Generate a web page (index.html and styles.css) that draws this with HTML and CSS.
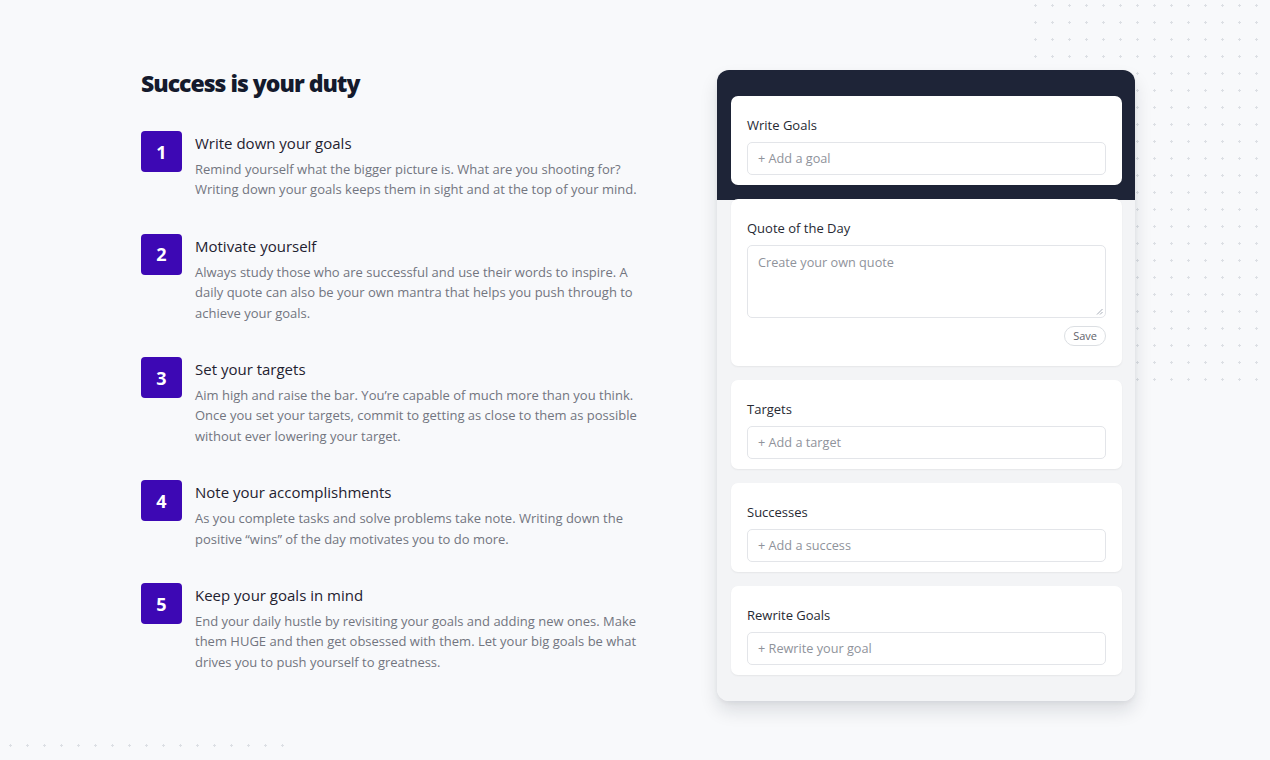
FILE: index.html
```html
<!DOCTYPE html>
<html lang="en">
<head>
<meta charset="utf-8">
<title>Success is your duty</title>
<link rel="stylesheet" href="styles.css">
</head>
<body>
<div class="dots dots-top"></div>
<div class="dots dots-bottom"></div>
<main class="page">
  <section class="steps">
    <h1 class="title">Success is your duty</h1>
    <ol class="step-list">
      <li class="step">
        <span class="badge">1</span>
        <div class="step-body">
          <h2 class="step-title">Write down your goals</h2>
          <p class="step-text">Remind yourself what the bigger picture is. What are you shooting for? Writing down your goals keeps them in sight and at the top of your mind.</p>
        </div>
      </li>
      <li class="step">
        <span class="badge">2</span>
        <div class="step-body">
          <h2 class="step-title">Motivate yourself</h2>
          <p class="step-text">Always study those who are successful and use their words to inspire. A daily quote can also be your own mantra that helps you push through to achieve your goals.</p>
        </div>
      </li>
      <li class="step">
        <span class="badge">3</span>
        <div class="step-body">
          <h2 class="step-title">Set your targets</h2>
          <p class="step-text">Aim high and raise the bar. You’re capable of much more than you think. Once you set your targets, commit to getting as close to them as possible without ever lowering your target.</p>
        </div>
      </li>
      <li class="step">
        <span class="badge">4</span>
        <div class="step-body">
          <h2 class="step-title">Note your accomplishments</h2>
          <p class="step-text">As you complete tasks and solve problems take note. Writing down the positive “wins” of the day motivates you to do more.</p>
        </div>
      </li>
      <li class="step">
        <span class="badge">5</span>
        <div class="step-body">
          <h2 class="step-title">Keep your goals in mind</h2>
          <p class="step-text">End your daily hustle by revisiting your goals and adding new ones. Make them HUGE and then get obsessed with them. Let your big goals be what drives you to push yourself to greatness.</p>
        </div>
      </li>
    </ol>
  </section>

  <section class="panel">
    <div class="card">
      <label class="card-label">Write Goals</label>
      <div class="field">+ Add a goal</div>
    </div>
    <div class="card card-quote">
      <label class="card-label">Quote of the Day</label>
      <div class="field area">Create your own quote
        <svg class="grip" width="7" height="7" viewBox="0 0 7 7"><path d="M6.5 1 L1 6.5 M6.5 4 L4 6.5" stroke="#9ca3af" stroke-width="0.9" fill="none"/></svg>
      </div>
      <div class="actions"><span class="save">Save</span></div>
    </div>
    <div class="card">
      <label class="card-label">Targets</label>
      <div class="field">+ Add a target</div>
    </div>
    <div class="card">
      <label class="card-label">Successes</label>
      <div class="field">+ Add a success</div>
    </div>
    <div class="card">
      <label class="card-label">Rewrite Goals</label>
      <div class="field">+ Rewrite your goal</div>
    </div>
  </section>
</main>
</body>
</html>
```

FILE: styles.css
```css
* { box-sizing: border-box; }
html, body { margin: 0; padding: 0; }
body {
  width: 1270px;
  height: 760px;
  overflow: hidden;
  background: #f8f9fb;
  font-family: "Open Sans", "Noto Sans", sans-serif;
  position: relative;
}

.dots {
  position: absolute;
  background-image: radial-gradient(circle, #dcdfe4 1.1px, transparent 1.4px);
  background-size: 17px 17px;
  z-index: 0;
}
.dots-top {
  left: 1027px;
  top: -3px;
  width: 243px;
  height: 394px;
}
.dots-bottom {
  left: 2px;
  top: 737px;
  width: 290px;
  height: 40px;
}

.page {
  position: relative;
  z-index: 1;
  display: flex;
  align-items: flex-start;
  padding: 70px 0 0 141px;
}

.steps { width: 576px; }

.title {
  margin: 0 0 35px;
  font-family: "Open Sans", sans-serif;
  font-weight: 800;
  font-size: 23px;
  line-height: 26px;
  letter-spacing: -1px;
  color: #141a2c;
}

.step-list {
  list-style: none;
  margin: 0;
  padding: 0;
  display: flex;
  flex-direction: column;
  gap: 34px;
}

.step {
  display: flex;
  gap: 13px;
}

.badge {
  flex: none;
  width: 41px;
  height: 41px;
  border-radius: 4px;
  background: #3d08b4;
  color: #fff;
  font-weight: 700;
  font-size: 18px;
  display: flex;
  align-items: center;
  justify-content: center;
}

.step-body { width: 452px; }

.step-title {
  margin: 0 0 4px;
  font-size: 15px;
  font-weight: 400;
  line-height: 24px;
  color: #1f2230;
}

.step-text {
  margin: 0;
  font-size: 13px;
  line-height: 20.4px;
  color: #72757f;
}

.panel {
  width: 418px;
  border-radius: 12px;
  padding: 26px 13px 26px 14px;
  background: linear-gradient(#1e2437 0, #1e2437 130px, #f3f4f6 130px);
  box-shadow: 0 10px 18px rgba(17, 24, 39, 0.12), 0 2px 4px rgba(17, 24, 39, 0.05);
  display: flex;
  flex-direction: column;
  gap: 14px;
}

.card {
  background: #fff;
  border-radius: 7px;
  padding: 19px 16px 10px;
  box-shadow: 0 1px 2px rgba(0, 0, 0, 0.06);
  display: flex;
  flex-direction: column;
}

.card-label {
  font-size: 13px;
  line-height: 20px;
  color: #272a33;
  margin-bottom: 7px;
}

.field {
  height: 33px;
  border: 1px solid #e3e5e9;
  border-radius: 5px;
  padding: 0 10px;
  font-size: 12.7px;
  line-height: 31px;
  color: #8f939b;
  position: relative;
}

.area {
  height: 73px;
  line-height: 18px;
  padding-top: 7px;
}

.grip {
  position: absolute;
  right: 2px;
  bottom: 2px;
}

.actions {
  display: flex;
  justify-content: flex-end;
  margin-top: 8px;
  margin-bottom: 10px;
}

.save {
  height: 20px;
  padding: 0 8px;
  border: 1px solid #dcdfe3;
  border-radius: 10px;
  font-size: 11px;
  line-height: 18px;
  color: #5f636b;
}
```
